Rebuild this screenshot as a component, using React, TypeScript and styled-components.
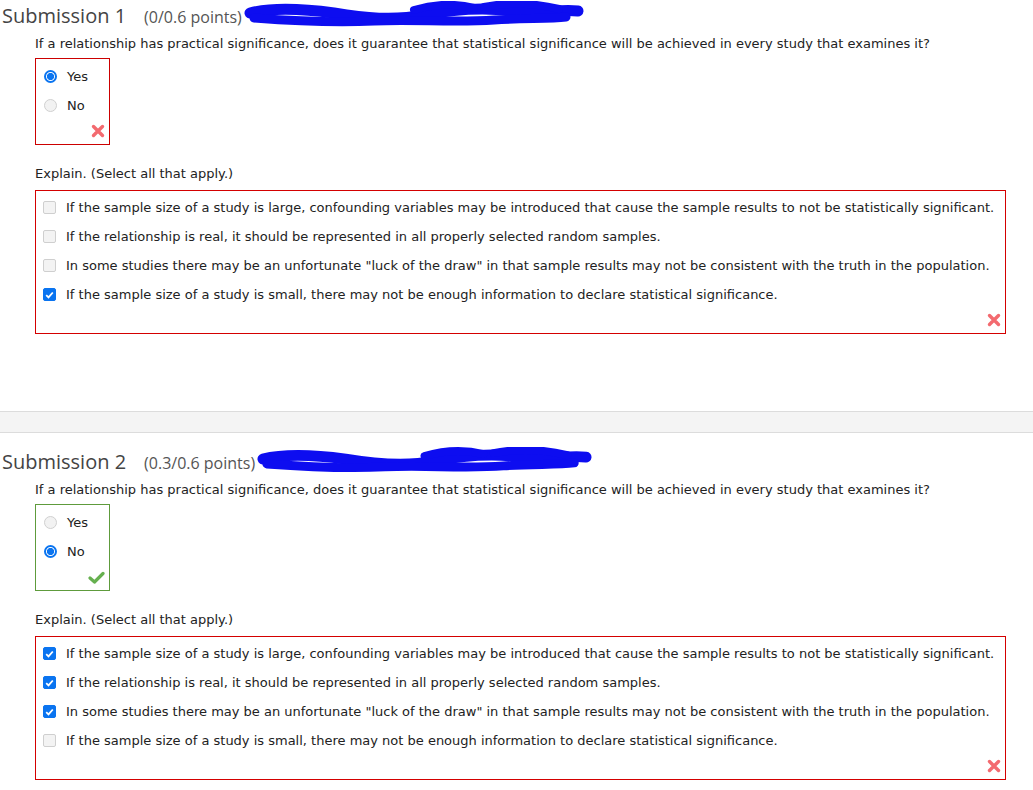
import React from "react";
import styled, { createGlobalStyle } from "styled-components";

const GlobalStyle = createGlobalStyle`
  html, body { margin: 0; padding: 0; background: #fff; }
  body { font-family: "DejaVu Sans", Verdana, sans-serif; color: #222; }
`;

const TONES = {
  bad: "#cc0000",
  good: "#5e9b3c",
  explain: "#d40000",
};

type Tone = keyof typeof TONES;

const Page = styled.div`
  width: 1033px;
  display: flex;
  flex-direction: column;
`;

const Submission = styled.section<{ $top: number }>`
  display: flex;
  flex-direction: column;
  margin-top: ${(p) => p.$top}px;
`;

const Header = styled.div`
  height: 30px;
  display: flex;
  align-items: center;
  padding-left: 2px;
`;

const Title = styled.h2`
  margin: 0 18px 0 0;
  font-family: "Open Sans", "Noto Sans", sans-serif;
  font-weight: 400;
  font-size: 20px;
  color: #444;
`;

const Points = styled.span`
  font-family: "Open Sans", "Noto Sans", sans-serif;
  font-size: 16px;
  color: #555;
  margin-top: 3px;
`;

const Body = styled.div`
  padding-left: 35px;
  display: flex;
  flex-direction: column;
  align-items: flex-start;
`;

const Question = styled.p`
  margin: 0;
  height: 27px;
  display: flex;
  align-items: center;
  font-size: 13px;
  white-space: nowrap;
`;

const RadioBox = styled.div<{ $tone: Tone }>`
  box-sizing: border-box;
  width: 75px;
  height: 87px;
  margin-top: 1px;
  border: 1px solid ${(p) => TONES[p.$tone]};
  display: flex;
  flex-direction: column;
  padding: 3px 4px 0 8px;
`;

const ExplainBox = styled.div<{ $tone: Tone }>`
  box-sizing: border-box;
  width: 971px;
  height: 144px;
  margin-top: 2px;
  border: 1px solid ${(p) => TONES[p.$tone]};
  display: flex;
  flex-direction: column;
  padding: 2px 4px 0 7px;
`;

const OptionRow = styled.label`
  height: 29px;
  display: flex;
  align-items: center;
  gap: 10px;
  font-size: 13px;
  white-space: nowrap;
`;

const Radio = styled.span<{ $on: boolean }>`
  box-sizing: border-box;
  width: 13px;
  height: 13px;
  border-radius: 50%;
  flex: none;
  ${(p) =>
    p.$on
      ? `border: 2px solid #0a74f0; background: radial-gradient(circle, #0a74f0 0 3.3px, #fff 3.9px);`
      : `border: 1px solid #d0d0d0; background: #f2f2f2;`}
`;

const Check = styled.span<{ $on: boolean }>`
  box-sizing: border-box;
  width: 13px;
  height: 13px;
  border-radius: 2px;
  flex: none;
  display: flex;
  align-items: center;
  justify-content: center;
  ${(p) =>
    p.$on
      ? `background: #0a74f0; border: 1px solid #0a74f0;`
      : `border: 1px solid #cfcfcf; background: #f3f3f3;`}
`;

const MarkRow = styled.div`
  height: 22px;
  display: flex;
  align-items: center;
  justify-content: flex-end;
`;

const Label = styled.div`
  height: 30px;
  display: flex;
  align-items: center;
  font-size: 13px;
  margin-top: 13px;
`;

const Divider = styled.div`
  height: 20px;
  margin-top: 77px;
  background: #f4f4f4;
  border-top: 1px solid #dcdcdc;
  border-bottom: 1px solid #dcdcdc;
`;

const Scribble = styled.svg`
  flex: none;
  margin-left: 2px;
`;

const CrossIcon = () => (
  <svg width="14" height="14" viewBox="0 0 14 14">
    <path d="M2.5 2.5 L11.5 11.5 M11.5 2.5 L2.5 11.5" stroke="#f36a6f" strokeWidth="3.4" strokeLinecap="round" />
  </svg>
);

const CheckIcon = () => (
  <svg width="17" height="13" viewBox="0 0 17 13">
    <path d="M2 7 L6.5 11 L15 2.5" stroke="#66b04f" strokeWidth="3.2" fill="none" strokeLinecap="round" strokeLinejoin="round" />
  </svg>
);

const TickMark = () => (
  <svg width="9" height="8" viewBox="0 0 9 8">
    <path d="M1.2 4.2 L3.5 6.4 L7.8 1.5" stroke="#fff" strokeWidth="1.8" fill="none" />
  </svg>
);

const BlueScribble = ({ w }: { w: number }) => (
  <Scribble width={w} height="28" viewBox="0 0 340 28">
    <path d="M6 12 C30 6 60 8 90 12 C120 17 150 20 180 14 C210 8 240 6 270 10 C295 13 315 8 334 10" stroke="#0d0df0" strokeWidth="11" fill="none" strokeLinecap="round" />
    <path d="M10 17 C50 20 90 22 130 20 C170 18 210 22 250 19 C280 17 305 18 322 16" stroke="#0d0df0" strokeWidth="9" fill="none" strokeLinecap="round" />
    <path d="M170 9 C190 3 210 2 230 7 M240 6 C265 1 290 2 315 8" stroke="#0d0df0" strokeWidth="8" fill="none" strokeLinecap="round" />
  </Scribble>
);

const QUESTION =
  "If a relationship has practical significance, does it guarantee that statistical significance will be achieved in every study that examines it?";

const EXPLAIN = [
  "If the sample size of a study is large, confounding variables may be introduced that cause the sample results to not be statistically significant.",
  "If the relationship is real, it should be represented in all properly selected random samples.",
  'In some studies there may be an unfortunate "luck of the draw" in that sample results may not be consistent with the truth in the population.',
  "If the sample size of a study is small, there may not be enough information to declare statistical significance.",
];

type Sub = {
  n: number;
  points: string;
  yes: boolean;
  correct: boolean;
  checks: boolean[];
  scribble: number;
  top: number;
};

const SUBS: Sub[] = [
  { n: 1, points: "(0/0.6 points)", yes: true, correct: false, checks: [false, false, false, true], scribble: 340, top: 0 },
  { n: 2, points: "(0.3/0.6 points)", yes: false, correct: true, checks: [true, true, true, false], scribble: 335, top: 13 },
];

const SubmissionBlock = ({ s }: { s: Sub }) => (
  <Submission $top={s.top}>
    <Header>
      <Title>Submission {s.n}</Title>
      <Points>{s.points}</Points>
      <BlueScribble w={s.scribble} />
    </Header>
    <Body>
      <Question>{QUESTION}</Question>
      <RadioBox $tone={s.correct ? "good" : "bad"}>
        <OptionRow>
          <Radio $on={s.yes} />
          Yes
        </OptionRow>
        <OptionRow>
          <Radio $on={!s.yes} />
          No
        </OptionRow>
        <MarkRow>{s.correct ? <CheckIcon /> : <CrossIcon />}</MarkRow>
      </RadioBox>
      <Label>Explain. (Select all that apply.)</Label>
      <ExplainBox $tone="explain">
        {EXPLAIN.map((t, i) => (
          <OptionRow key={i}>
            <Check $on={s.checks[i]}>{s.checks[i] && <TickMark />}</Check>
            {t}
          </OptionRow>
        ))}
        <MarkRow>
          <CrossIcon />
        </MarkRow>
      </ExplainBox>
    </Body>
  </Submission>
);

export default function App() {
  return (
    <Page>
      <GlobalStyle />
      <SubmissionBlock s={SUBS[0]} />
      <Divider />
      <SubmissionBlock s={SUBS[1]} />
    </Page>
  );
}
